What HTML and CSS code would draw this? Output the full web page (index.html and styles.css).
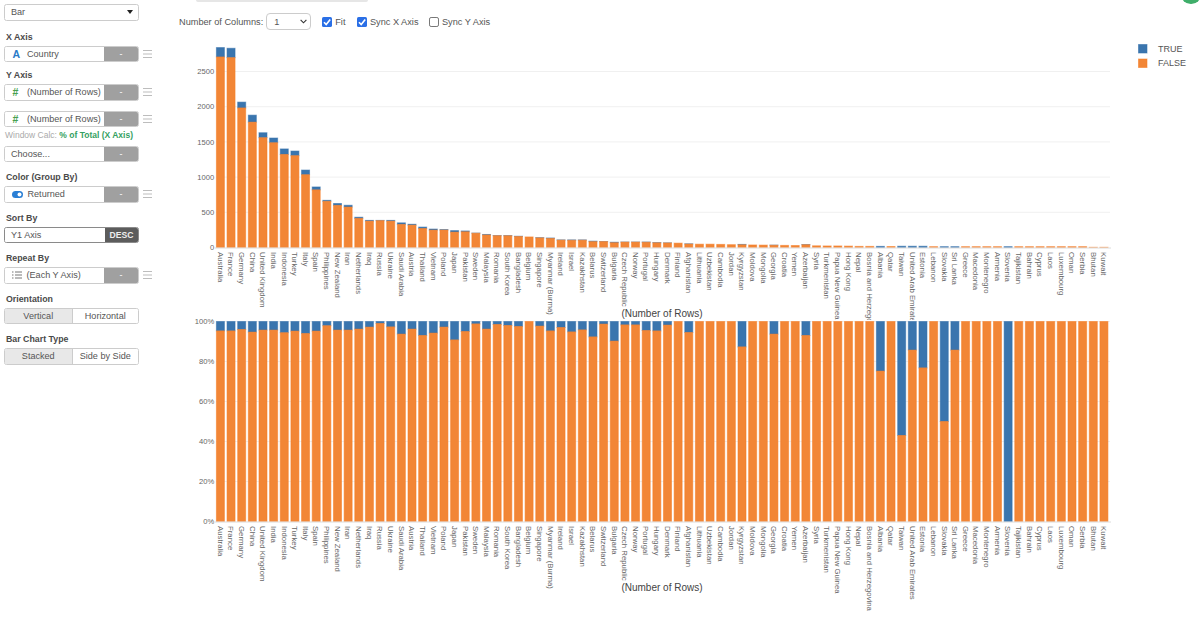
FILE: index.html
```html
<!DOCTYPE html>
<html lang="en">
<head>
<meta charset="utf-8">
<title>Bar chart</title>
<link rel="stylesheet" href="styles.css">
</head>
<body>
<aside class="sidebar">
  <div class="select-box"><span>Bar</span><svg class="caret" viewBox="0 0 6 4" width="6" height="4"><path d="M0 0h6L3 4z"/></svg></div>

  <div class="label label-first">X Axis</div>
  <div class="row">
    <div class="field"><span class="field-main"><b class="ico ico-a">A</b>Country</span><span class="field-btn">-</span></div>
    <svg class="handle" viewBox="0 0 9 8" width="9" height="8"><path d="M0 .5h9M0 4h9M0 7.5h9"/></svg>
  </div>

  <div class="label label-y">Y Axis</div>
  <div class="row">
    <div class="field"><span class="field-main"><b class="ico ico-n">#</b>(Number of Rows)</span><span class="field-btn">-</span></div>
    <svg class="handle" viewBox="0 0 9 8" width="9" height="8"><path d="M0 .5h9M0 4h9M0 7.5h9"/></svg>
  </div>
  <div class="row row-second">
    <div class="field"><span class="field-main"><b class="ico ico-n">#</b>(Number of Rows)</span><span class="field-btn">-</span></div>
    <svg class="handle" viewBox="0 0 9 8" width="9" height="8"><path d="M0 .5h9M0 4h9M0 7.5h9"/></svg>
  </div>
  <div class="window-calc">Window Calc: <b>% of Total (X Axis)</b></div>
  <div class="row">
    <div class="field"><span class="field-main plain">Choose...</span><span class="field-btn">-</span></div>
  </div>

  <div class="label">Color (Group By)</div>
  <div class="row">
    <div class="field"><span class="field-main"><svg class="ico-svg" viewBox="0 0 11 7" width="11" height="7"><rect width="11" height="7" rx="3.5" fill="#2a7fd5"/><circle cx="7.5" cy="3.5" r="2" fill="#fff"/></svg>Returned</span><span class="field-btn">-</span></div>
    <svg class="handle" viewBox="0 0 9 8" width="9" height="8"><path d="M0 .5h9M0 4h9M0 7.5h9"/></svg>
  </div>

  <div class="label">Sort By</div>
  <div class="row">
    <div class="field field-dark"><span class="field-main plain">Y1 Axis</span><span class="field-btn btn-dark">DESC</span></div>
  </div>

  <div class="label">Repeat By</div>
  <div class="row">
    <div class="field"><span class="field-main"><svg class="ico-svg" viewBox="0 0 10 8" width="10" height="8"><path class="list-ico" d="M3 1h7M3 4h7M3 7h7M0 1h1.5M0 4h1.5M0 7h1.5"/></svg>(Each Y Axis)</span><span class="field-btn">-</span></div>
    <svg class="handle" viewBox="0 0 9 8" width="9" height="8"><path d="M0 .5h9M0 4h9M0 7.5h9"/></svg>
  </div>

  <div class="label">Orientation</div>
  <div class="segment"><span class="seg seg-on">Vertical</span><span class="seg">Horizontal</span></div>

  <div class="label">Bar Chart Type</div>
  <div class="segment"><span class="seg seg-on">Stacked</span><span class="seg">Side by Side</span></div>
</aside>

<main class="main">
  <div class="top-strip"></div>
  <div class="toolbar">
    <span>Number of Columns:</span>
    <div class="col-select"><span>1</span><svg viewBox="0 0 8 5" width="7" height="5"><path d="M.7.7 4 4 7.3.7" fill="none" stroke="#333" stroke-width="1.3"/></svg></div>
    <label class="check check-fit"><svg class="box" viewBox="0 0 10 10" width="10" height="10"><rect width="10" height="10" rx="1.6" fill="#2a6fe6"/><path d="M2 5.2 4.2 7.6 8.2 2.6" fill="none" stroke="#fff" stroke-width="1.6"/></svg>Fit</label>
    <label class="check check-x"><svg class="box" viewBox="0 0 10 10" width="10" height="10"><rect width="10" height="10" rx="1.6" fill="#2a6fe6"/><path d="M2 5.2 4.2 7.6 8.2 2.6" fill="none" stroke="#fff" stroke-width="1.6"/></svg>Sync X Axis</label>
    <label class="check check-y"><svg class="box" viewBox="0 0 10 10" width="10" height="10"><rect x=".5" y=".5" width="9" height="9" rx="1.6" fill="#fff" stroke="#777"/></svg>Sync Y Axis</label>
  </div>
  <svg id="chart" class="chart" viewBox="170 40 1030 579" width="1030" height="579"></svg>
</main>
<div class="avatar"></div>
<script src="chart.js"></script>
</body>
</html>
```

FILE: styles.css
```css
* { box-sizing: border-box; }
html, body { margin: 0; padding: 0; height: 619px; overflow: hidden; background: #fff; }
body { display: flex; font-family: "Liberation Sans", Arial, sans-serif; font-size: 9.1px; color: #555; position: relative; }

.sidebar { width: 170px; flex: none; padding: 4px 0 0 4px; }
.select-box { width: 135px; height: 16.5px; border: 1px solid #ccc; border-radius: 2.5px; display: flex; align-items: center; justify-content: space-between; padding: 0 5px 0 6px; color: #555; }
.caret { fill: #222; }

.label { height: 17px; line-height: 17px; margin-top: 7px; font-weight: bold; font-size: 8.8px; color: #4a4a4a; padding-left: 2px; }
.label-first { margin-top: 8px; }
.label-y { margin-top: 5px; }

.row { display: flex; align-items: center; gap: 4px; height: 16.5px; }
.row-second { margin-top: 10px; }

.field { width: 135px; height: 16.5px; display: flex; border: 1px solid #ccc; border-radius: 2.5px; overflow: hidden; flex: none; }
.field-main { flex: 1; display: flex; align-items: center; padding-left: 6.5px; white-space: nowrap; color: #555; background: #fff; }
.field-main.plain { padding-left: 6px; }
.field-btn { width: 34px; flex: none; background: #a0a0a0; color: #fff; display: flex; align-items: center; justify-content: center; font-size: 9px; }
.field-dark { border-color: #8a8a8a; }
.btn-dark { background: #5c5c5c; font-weight: bold; font-size: 8.6px; width: 33px; color: #eee; }

.ico { width: 15.5px; flex: none; font-size: 10.5px; padding-left: 1px; }
.ico-a { color: #2a7bc8; }
.ico-n { color: #47a04f; }
.ico-svg { margin-right: 5px; flex: none; }
.list-ico { stroke: #777; stroke-width: 1; fill: none; }

.handle { stroke: #bdbdbd; stroke-width: 1; fill: none; flex: none; }

.window-calc { font-size: 8.5px; color: #aaa; height: 18px; line-height: 15.5px; padding-left: 1px; white-space: nowrap; margin-top: .5px; }
.window-calc b { color: #35a162; }

.segment { width: 135px; height: 16.5px; display: flex; border: 1px solid #ccc; border-radius: 2.5px; overflow: hidden; }
.seg { flex: 1; display: flex; align-items: center; justify-content: center; color: #555; background: #fff; white-space: nowrap; }
.seg-on { background: #e8e8e8; border-right: 1px solid #ccc; flex: none; width: 67.5px; }

.main { flex: 1; min-width: 0; display: flex; flex-direction: column; }
.top-strip { width: 172px; height: 2px; margin-left: 26px; background: #e6e6e6; border-radius: 0 0 3px 3px; }
.toolbar { height: 17px; margin: 11px 0 10px 9px; display: flex; align-items: center; white-space: nowrap; color: #555; font-size: 9.2px; }
.col-select { width: 45px; height: 17px; margin-left: 3px; border: 1px solid #ccc; border-radius: 4px; display: flex; align-items: center; justify-content: space-between; padding: 0 3.5px 0 7px; }
.check { display: flex; align-items: center; }
.check-fit { margin-left: 11px; }
.check-x { margin-left: 11.5px; }
.check-y { margin-left: 10.5px; }
.box { margin-right: 3px; flex: none; }

.chart { display: block; flex: none; }
.grid { stroke: #f0f0f0; stroke-width: 1; }
.base { stroke: #dcdcdc; stroke-width: 1; }
.bar-f { fill: #f28636; stroke: #f57c22; stroke-opacity: .55; stroke-width: 1; }
.bar-t { fill: #3a75ae; stroke: #2f6ea9; stroke-opacity: .55; stroke-width: 1; }
.tick { font-size: 7.6px; fill: #666; text-anchor: end; }
.cat { font-size: 7.8px; fill: #666; }
.axis-title { font-size: 10px; fill: #444; text-anchor: middle; }
.legend-text { font-size: 9px; fill: #555; }

.avatar { position: absolute; left: 1181px; top: -16px; width: 19.5px; height: 19.5px; border-radius: 50%; background: #3fae6a; }
```

FILE: chart.js
```js
// name, total rows, % FALSE
var DATA = [
  ["Australia",2840,95.3],["France",2830,95.3],["Germany",2065,96],["China",1880,94.7],
  ["United Kingdom",1630,95.7],["India",1555,95.7],["Indonesia",1400,94.4],["Turkey",1370,95.2],
  ["Italy",1100,94],["Spain",860,95.2],["Philippines",670,97.9],["New Zealand",625,95.7],
  ["Iran",600,95.7],["Netherlands",430,96.2],["Iraq",385,97.2],["Russia",385,99],
  ["Ukraine",385,97.3],["Saudi Arabia",350,93.7],["Austria",330,96.2],["Thailand",290,93],
  ["Vietnam",262,94.2],["Poland",255,97.2],["Japan",240,90.8],["Pakistan",235,95],
  ["Sweden",205,98.8],["Malaysia",185,96.2],["Romania",170,98.5],["South Korea",170,98],
  ["Bangladesh",160,97.5],["Belgium",150,100],["Singapore",140,97.7],["Myanmar (Burma)",135,95.3],
  ["Ireland",108,97],["Israel",108,94.8],["Kazakhstan",108,95.8],["Belarus",90,92.3],
  ["Switzerland",85,98.7],["Bulgaria",75,90.2],["Czech Republic",78,98.3],["Norway",78,98.3],
  ["Portugal",78,95.5],["Hungary",70,95.3],["Denmark",66,98.2],["Finland",62,100],
  ["Afghanistan",52,94.5],["Lithuania",47,100],["Uzbekistan",47,100],["Cambodia",44,100],
  ["Jordan",40,100],["Kyrgyzstan",44,87.3],["Moldova",36,100],["Mongolia",34,100],
  ["Georgia",34,93.7],["Croatia",30,100],["Yemen",28,100],["Azerbaijan",42,93],
  ["Syria",24,100],["Turkmenistan",22,100],["Papua New Guinea",22,100],["Hong Kong",20,100],
  ["Nepal",16,100],["Bosnia and Herzegovina",16,100],["Albania",16,75.2],["Qatar",14,100],
  ["Taiwan",18,43],["United Arab Emirates",18,85.7],["Estonia",18,76.8],["Lebanon",12,100],
  ["Slovakia",12,50],["Sri Lanka",12,85.7],["Greece",12,100],["Macedonia",12,100],
  ["Montenegro",12,100],["Armenia",12,100],["Slovenia",12,0],["Tajikistan",12,100],
  ["Bahrain",12,100],["Cyprus",12,100],["Laos",12,100],["Luxembourg",12,100],
  ["Oman",12,100],["Serbia",12,100],["Bhutan",3,100],["Kuwait",3,100]
];
var NS = "http://www.w3.org/2000/svg";
var svg = document.getElementById("chart");
function el(name, attrs, text, parent) {
  var e = document.createElementNS(NS, name);
  for (var k in attrs) e.setAttribute(k, attrs[k]);
  if (text !== undefined && text !== null) e.textContent = text;
  (parent || svg).appendChild(e);
  return e;
}
var X0 = 216.4, STEP = 10.645, BW = 8, XL = 216, XR = 1110;

var defs = el("defs", {});
var clip = el("clipPath", {id: "topclip"}, null, defs);
el("rect", {x: 170, y: 248, width: 1030, height: 72}, null, clip);

function bar(x, y0, y1, cls) {
  if (y1 - y0 <= 0) return;
  el("rect", {x: x, y: y0, width: BW, height: y1 - y0, "class": cls});
}
function labels(y, parent) {
  DATA.forEach(function (d, i) {
    var cx = X0 + STEP * i + BW / 2;
    el("text", {"class": "cat", x: 0, y: 0, dy: ".35em",
      transform: "translate(" + cx + " " + y + ") rotate(90)"}, d[0], parent);
  });
}
function ticks(list) {
  list.forEach(function (t) {
    el("line", {"class": "grid", x1: XL, x2: XR, y1: t[0], y2: t[0]});
    el("text", {"class": "tick", x: 214.2, y: t[0], dy: ".35em"}, t[1]);
  });
}

// top chart: rows too short to split visibly show the colour that dominates the reference
var BASE1 = 247.5, PX = 0.0704;
ticks([[212.3,"500"],[177.1,"1000"],[141.9,"1500"],[106.7,"2000"],[71.5,"2500"]]);
el("text", {"class": "tick", x: 214.2, y: BASE1, dy: ".35em"}, "0");
DATA.forEach(function (d, i) {
  var x = X0 + STEP * i, h = d[1] * PX, pct = d[2];
  if (d[1] <= 18 && pct < 90) pct = 0;
  var hf = h * pct / 100;
  bar(x, BASE1 - h, BASE1 - hf, "bar-t");
  bar(x, BASE1 - hf, BASE1, "bar-f");
});
el("line", {"class": "base", x1: 215, x2: XR + 1, y1: BASE1 + .5, y2: BASE1 + .5});
labels(252, el("g", {"clip-path": "url(#topclip)"}));
el("text", {"class": "axis-title", x: 662, y: 317}, "(Number of Rows)");

// bottom chart
var BASE2 = 521.5;
ticks([[481.5,"20%"],[441.5,"40%"],[401.5,"60%"],[361.5,"80%"],[321.5,"100%"]]);
el("text", {"class": "tick", x: 214.2, y: BASE2, dy: ".35em"}, "0%");
DATA.forEach(function (d, i) {
  var x = X0 + STEP * i, yf = BASE2 - d[2] * 2;
  bar(x, 321.5, yf, "bar-t");
  bar(x, yf, BASE2, "bar-f");
});
el("line", {"class": "base", x1: 215, x2: XR + 1, y1: BASE2 + .5, y2: BASE2 + .5});
labels(526);
el("text", {"class": "axis-title", x: 662, y: 591}, "(Number of Rows)");

// legend
el("rect", {x: 1138.5, y: 44.5, width: 8.5, height: 8.5, "class": "bar-t"});
el("rect", {x: 1138.5, y: 59, width: 8.5, height: 8.5, "class": "bar-f"});
el("text", {"class": "legend-text", x: 1158, y: 48.7, dy: ".35em"}, "TRUE");
el("text", {"class": "legend-text", x: 1158, y: 63.2, dy: ".35em"}, "FALSE");
```
